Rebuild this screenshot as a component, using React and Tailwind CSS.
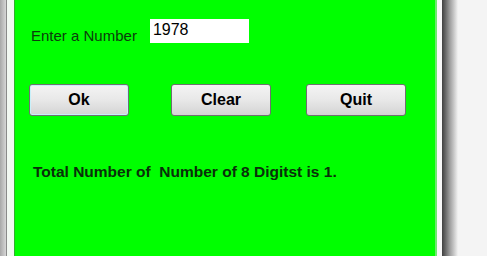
export default function App() {
  const btn =
    "h-8 w-[100px] rounded-[3px] border border-[#707070] bg-gradient-to-b from-[#f4f4f4] via-[#e8e8e8] to-[#d4d4d4] text-[16px] font-bold text-black";
  return (
    <div className="flex h-[256px] w-[487px] overflow-hidden bg-[#f4f4f4] font-['Liberation_Sans',Arial,sans-serif]">
      <div className="flex w-[14px] shrink-0">
        <div className="w-[6px] bg-gradient-to-r from-[#a8a8a8] to-[#d6d6d6]" />
        <div className="w-px bg-[#8a8a8a]" />
        <div className="flex-1 bg-[#f2f8f2]" />
      </div>
      <div className="w-[421px] shrink-0 border-l border-[#30b030] bg-[#00ff00]">
        <div className="flex h-[43px] items-start pl-[16px] pt-[19px]">
          <span className="pt-[8px] text-[15px] leading-[18px] text-[#0c3c0c]">Enter a Number</span>
          <input
            readOnly
            value="1978"
            className="ml-[13px] h-6 w-[99px] bg-white px-[3px] pb-[3px] text-[16px] text-black outline-none"
          />
        </div>
        <div className="flex pl-[14px] pt-[41px]">
          <button className={btn + " border-[#3aa8d0] shadow-[inset_0_0_0_1px_#c8f0fa]"}>Ok</button>
          <button className={btn + " ml-[42px]"}>Clear</button>
          <button className={btn + " ml-[35px]"}>Quit</button>
        </div>
        <p className="pl-[18px] pt-[44px] text-[15.5px] font-bold text-[#0a2e0a] whitespace-pre">
          {"Total Number of  Number of 8 Digitst is 1."}
        </p>
      </div>
      <div className="w-[2px] shrink-0 bg-[#70e870]" />
      <div className="w-[5px] shrink-0 bg-[#f8f8f8]" />
      <div className="w-[16px] shrink-0 bg-gradient-to-r from-[#404040] via-[#a0a0a0] to-[#f4f4f4]" />
      <div className="flex-1" />
    </div>
  );
}
